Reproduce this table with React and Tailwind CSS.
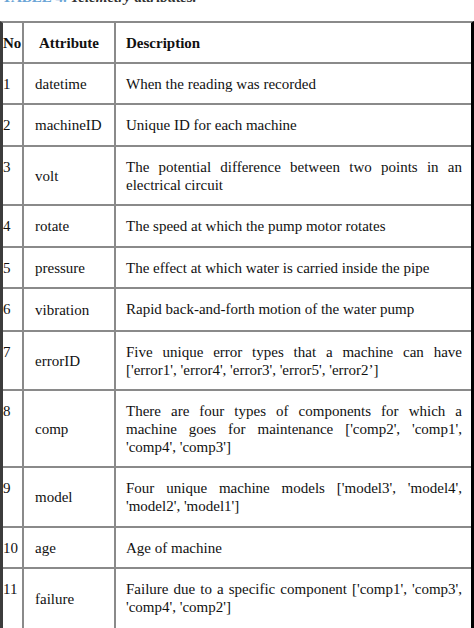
import React from "react";

const rows = [
  ["1", "datetime", "When the reading was recorded", "pb-[10px]"],
  ["2", "machineID", "Unique ID for each machine", "pb-[11px]"],
  ["3", "volt", "The potential difference between two points in an electrical circuit", "pb-[10px]"],
  ["4", "rotate", "The speed at which the pump motor rotates", "pb-[11px]"],
  ["5", "pressure", "The effect at which water is carried inside the pipe", "pb-[10px]"],
  ["6", "vibration", "Rapid back-and-forth motion of the water pump", "pb-[12px]"],
  ["7", "errorID", "Five unique error types that a machine can have ['error1', 'error4', 'error3', 'error5', 'error2\u2019]", "pb-[10px]"],
  ["8", "comp", "There are four types of components for which a machine goes for maintenance ['comp2', 'comp1', 'comp4', 'comp3']", "pb-[10px]"],
  ["9", "model", "Four unique machine models ['model3', 'model4', 'model2', 'model1']", "pb-[11px]"],
  ["10", "age", "Age of machine", "pb-[10px]"],
  ["11", "failure", "Failure due to a specific component ['comp1', 'comp3', 'comp4', 'comp2']", "pb-[12px]"],
];

export default function App() {
  return (
    <div className="w-[474px] h-[628px] overflow-hidden bg-white text-[#111] font-['Liberation_Serif','Times_New_Roman','DejaVu_Serif',serif]">
      <div className="h-[21px] overflow-hidden">
        <div className="-mt-[12px] text-[15px] leading-[18px] font-bold pl-[2px] whitespace-nowrap">
          <span className="text-[#6aa5d6]">TABLE 4.</span>{" "}
          <span className="italic text-[#333]">Telemetry attributes.</span>
        </div>
      </div>
      <div className="border-l-[3px] border-l-[#3c3c3c] border-r-[3px] border-r-black border-t-2 border-t-[#8a8a8a] text-[15px] leading-[18px]">
        <div className="grid grid-cols-[21px_92px_1fr] border-b-2 border-b-[#8a8a8a] font-bold">
          <div className="border-r-2 border-r-[#8a8a8a] pt-[11px] pb-[10px]">No</div>
          <div className="border-r-2 border-r-[#8a8a8a] pt-[11px] pb-[10px] text-center">Attribute</div>
          <div className="pl-[10px] pt-[11px] pb-[10px]">Description</div>
        </div>
        {rows.map(([n, a, d, pb]) => (
          <div key={n} className="grid grid-cols-[21px_92px_1fr] border-b-2 border-b-[#8a8a8a]">
            <div className="border-r-2 border-r-[#8a8a8a] pt-[11px]">{n}</div>
            <div className="border-r-2 border-r-[#8a8a8a] pl-[11px] flex items-center">{a}</div>
            <div className={`pl-[10px] pr-[9px] pt-[11px] text-justify ${pb}`}>{d}</div>
          </div>
        ))}
      </div>
    </div>
  );
}
